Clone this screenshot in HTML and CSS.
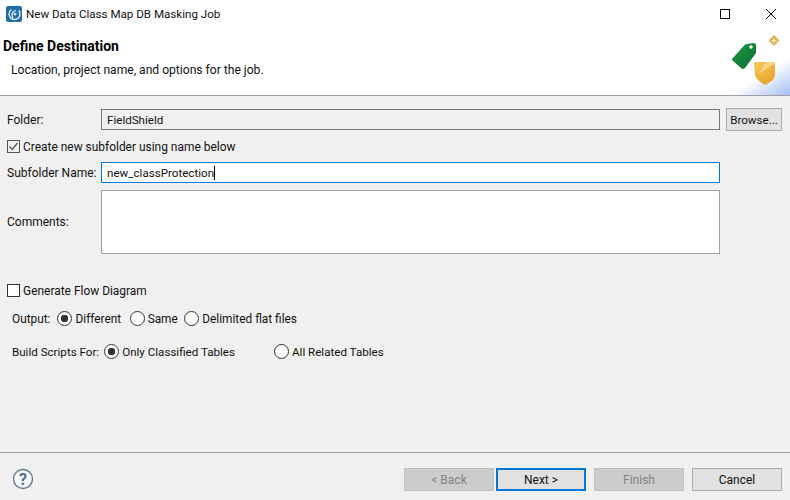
FILE: index.html
```html
<!DOCTYPE html>
<html lang="en">
<head>
<meta charset="utf-8">
<title>New Data Class Map DB Masking Job</title>
<link rel="stylesheet" href="styles.css">
</head>
<body>
<div class="window">
  <header class="top">
    <div class="titlebar">
      <svg class="appicon" width="16" height="16" viewBox="0 0 16 16"><rect width="16" height="16" rx="2" fill="#1f6ea8"/><circle cx="8.5" cy="8" r="5.5" fill="none" stroke="#e8f2f8" stroke-width="1.4" stroke-dasharray="22 8"/><path d="M7 12C5 9 6 5 10 4.500" fill="none" stroke="#fff" stroke-width="1.200"/><circle cx="9" cy="8" r="1.500" fill="#bcd8ea"/></svg>
      <span class="title">New Data Class Map DB Masking Job</span>
      <div class="winctl">
        <svg width="12" height="12" viewBox="0 0 12 12"><rect x="1.500" y="1.500" width="9" height="9" fill="none" stroke="#000"/></svg>
        <svg width="12" height="12" viewBox="0 0 12 12"><path d="M1 1L11 11M11 1L1 11" stroke="#000" fill="none"/></svg>
      </div>
    </div>
    <div class="banner">
      <div class="bannertext">
        <h1>Define Destination</h1>
        <p>Location, project name, and options for the job.</p>
      </div>
      <svg class="wizard" width="100" height="65" viewBox="0 0 100 65">
        <defs>
          <linearGradient id="sky" x1="0.45" y1="0.35" x2="1" y2="1"><stop offset="0.35" stop-color="#fff"/><stop offset="1" stop-color="#a5bef4"/></linearGradient>
          <linearGradient id="tag" x1="0" y1="0" x2="1" y2="1"><stop offset="0" stop-color="#1f9a4a"/><stop offset="1" stop-color="#0a6d30"/></linearGradient>
          <linearGradient id="shield" x1="0" y1="0" x2="0.6" y2="1"><stop offset="0" stop-color="#fbc95c"/><stop offset="1" stop-color="#e6a528"/></linearGradient>
        </defs>
        <path d="M29 65L100 13V65Z" fill="url(#sky)"/>
        <path d="M42 29L55 14.500L63 13Q66 13 66 15L66 23L55 38Q53 40 51 38L43 31Q41.500 30 42 29Z" fill="url(#tag)"/>
        <circle cx="61" cy="17" r="1.700" fill="#fff"/>
        <path d="M64 32H85V44Q85 49 80 52L75 55Q71 53 68 50L65 46Z" fill="url(#shield)"/>
        <path d="M76 32H85V34Q78 37 68 45Q73 36 76 32Z" fill="#fde3a5" opacity=".6"/>
        <path d="M84 5L89.500 10.500L84 16L78.500 10.500Z" fill="#d9b45a"/>
        <path d="M84 8V13M81.500 10.500H86.500" stroke="#fff3cf" stroke-width="1"/>
      </svg>
    </div>
  </header>
  <main class="content">
    <div class="form">
      <label class="lab">Folder:</label>
      <div class="field ro">FieldShield</div>
      <button class="btn browse">Browse...</button>
      <div class="check span"><span class="box on"><svg width="11" height="11" viewBox="0 0 11 11"><path d="M1.500 5.500L4.200 8.500L9.500 2" fill="none" stroke="#555" stroke-width="1.300"/></svg></span><span class="txt">Create new subfolder using name below</span></div>
      <label class="lab">Subfolder Name:</label>
      <div class="field focus">new_classProtection<i class="caret"></i></div>
      <span></span>
      <label class="lab comm">Comments:</label>
      <div class="field area"></div>
      <span></span>
    </div>
    <div class="check flow"><span class="box"></span><span class="txt">Generate Flow Diagram</span></div>
    <div class="radios out">
      <span class="rl">Output:</span>
      <span class="radio on r1"><span class="txt">Different</span></span>
      <span class="radio r2"><span class="txt">Same</span></span>
      <span class="radio"><span class="txt">Delimited flat files</span></span>
    </div>
    <div class="radios build">
      <span class="rl">Build Scripts For:</span>
      <span class="radio on r3"><span class="txt">Only Classified Tables</span></span>
      <span class="radio"><span class="txt">All Related Tables</span></span>
    </div>
  </main>
  <footer class="foot">
    <svg class="help" width="22" height="22" viewBox="0 0 22 22"><circle cx="11" cy="11" r="9.500" fill="#f4f6f9" stroke="#5f7796" stroke-width="1.300"/><text x="11" y="16.500" text-anchor="middle" class="q">?</text></svg>
    <div class="buttons">
      <button class="btn dis">&lt; Back</button>
      <button class="btn next">Next &gt;</button>
      <button class="btn dis finish">Finish</button>
      <button class="btn cancel">Cancel</button>
    </div>
  </footer>
</div>
</body>
</html>
```
FILE: styles.css
```css
* { box-sizing: border-box; }
html, body { margin: 0; padding: 0; }
body { width: 790px; height: 500px; overflow: hidden; font-family: Roboto, "Open Sans", sans-serif; font-size: 11.6px; color: #111; background: #f0f0f0; }
.window { width: 790px; height: 500px; display: flex; flex-direction: column; }
.top { height: 96px; background: #fff; border-bottom: 1px solid #a0a0a0; flex: none; }
.titlebar { height: 30px; display: flex; align-items: center; padding: 0 0 2px 6px; }
.appicon { flex: none; }
.title { margin-left: 4px; }
.winctl { margin-left: auto; display: flex; gap: 34px; padding-right: 13px; }
.banner { display: flex; height: 65px; position: relative; }
.bannertext { padding-left: 3px; }
.bannertext h1 { margin: 8px 0 0; font-size: 14px; font-weight: 700; color: #000; line-height: 16px; }
.bannertext p { margin: 8px 0 0 8px; line-height: 16px; font-size: 12.1px; }
.wizard { position: absolute; right: 0; bottom: 0; }
.content { flex: 1; padding: 12px 8px 0 7px; }
.form { display: grid; grid-template-columns: 94px 619px 56px; align-items: center; }
.lab { line-height: 16px; padding-top: 1px; font-size: 12px; }
.lab.comm { margin-top: 5px; }
.field { height: 21px; border: 1px solid #7a7a7a; background: #fff; padding: 1px 5px 0; line-height: 19px; }
.field.ro { background: #f0f0f0; }
.field.focus { border-color: #0078d7; display: flex; align-items: center; }
.caret { width: 1px; height: 14px; background: #000; }
.field.area { height: 64px; border-color: #a0a0a0; margin-top: 7px; }
.browse { margin-left: 6px; width: 56px; height: 23px; }
.btn { font: inherit; color: #111; background: #e1e1e1; border: 1px solid #adadad; padding: 0; height: 23px; }
.check { display: flex; align-items: center; gap: 3px; line-height: 16px; font-size: 11.95px; }
.txt { padding-top: 1px; }
.check.span { grid-column: 1 / -1; margin: 8px 0 8px; height: 15px; }
.box { width: 13px; height: 13px; border: 1px solid #333; background: #fff; display: flex; align-items: center; justify-content: center; flex: none; }
.box.on { border-color: #555; background: #f0f0f0; }
.check.flow { margin-top: 29px; height: 15px; }
.radios { display: flex; align-items: center; height: 16px; padding-left: 5px; }
.out { margin-top: 12px; font-size: 11.85px; }
.out .rl { margin-right: 7px; }
.build { margin-top: 17px; }
.rl { margin-right: 5px; padding-top: 1px; }
.radio { display: flex; align-items: center; gap: 3px; }
.radio::before { content: ""; width: 13px; height: 13px; border: 1px solid #333; border-radius: 50%; background: #fff; flex: none; }
.radio.on::before { background: radial-gradient(circle, #333 0 3.500px, #fff 4px); }
.r1 { margin-right: 8.5px; }
.r2 { margin-right: 6.5px; }
.r3 { margin-right: 39px; }
.foot { height: 48px; flex: none; border-top: 1px solid #a0a0a0; display: flex; align-items: flex-start; padding: 15px 8px 0 12px; }
.help { flex: none; }
.q { font-family: Roboto, sans-serif; font-size: 16px; font-weight: 700; fill: #4e6a8e; }
.buttons { margin-left: auto; display: flex; font-size: 12px; }
.buttons .btn { width: 90px; }
.dis { background: #ccc; color: #838383; border-color: #bfbfbf; }
.next { border: 2px solid #0078d7; margin-left: 2px; }
.finish { margin-left: 8px; }
.cancel { margin-left: 8px; }
```
